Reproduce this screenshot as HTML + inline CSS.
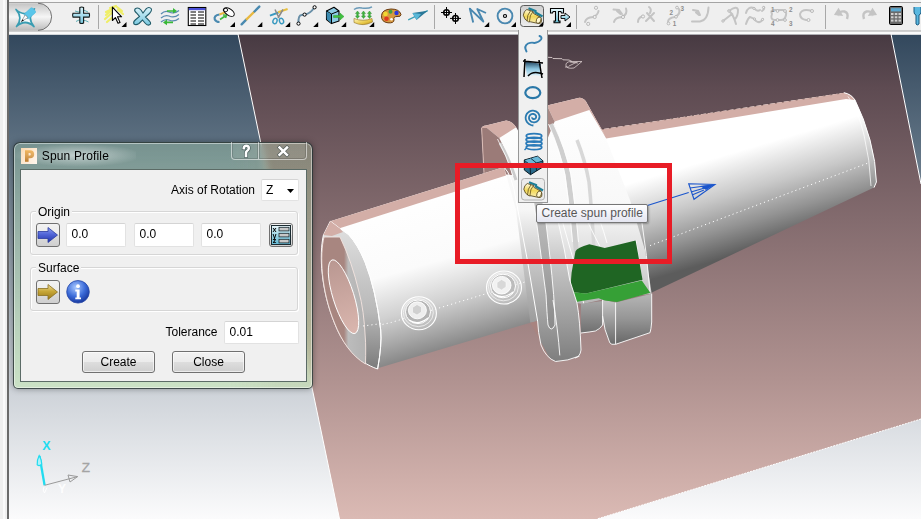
<!DOCTYPE html>
<html><head><meta charset="utf-8">
<style>
html,body{margin:0;padding:0}
body{width:921px;height:519px;overflow:hidden;position:relative;background:#efefef;font-family:"Liberation Sans",sans-serif;}
.abs{position:absolute}
#vp{position:absolute;left:0;top:0}

.t{position:absolute;font-size:12px;line-height:12px;white-space:pre;color:#000}
.fld{box-sizing:border-box;background:#fff;border:1px solid #e2e2e2;border-top-color:#d4d4d4;border-radius:2px}
.grp{box-sizing:border-box;border:1px solid #d6d6d6;border-radius:3px;box-shadow:inset 1px 1px 0 #fff, 1px 1px 0 #fff}
.btn3{box-sizing:border-box;border:1px solid #707070;border-radius:3px;background:linear-gradient(#f2f2f2 0%,#ebebeb 50%,#dddddd 51%,#cfcfcf 100%)}
.pbtn{box-sizing:border-box;border:1px solid #707070;border-radius:3px;background:linear-gradient(#f2f2f2 0%,#ebebeb 50%,#dddddd 51%,#cfcfcf 100%);font-size:12px;text-align:center;line-height:20px;color:#000;box-shadow:inset 0 0 0 1px rgba(255,255,255,0.6)}
</style></head><body>
<svg id="vp" width="921" height="519" viewBox="0 0 921 519">
<defs>
<linearGradient id="bgG" x1="0" y1="35" x2="0" y2="519" gradientUnits="userSpaceOnUse">
<stop offset="0" stop-color="#33485d"/>
<stop offset="0.22" stop-color="#5c6f80"/>
<stop offset="0.73" stop-color="#cdd2d8"/>
<stop offset="1" stop-color="#fbfbfc"/>
</linearGradient>
<linearGradient id="plG" x1="0" y1="35" x2="0" y2="519" gradientUnits="userSpaceOnUse">
<stop offset="0" stop-color="#473a42"/>
<stop offset="0.11" stop-color="#5e4b52"/>
<stop offset="0.71" stop-color="#b09290"/>
<stop offset="1" stop-color="#dbbab4"/>
</linearGradient>
</defs>
<!-- chrome -->
<rect x="0" y="0" width="921" height="519" fill="#efefef"/>
<rect x="3" y="0" width="2" height="519" fill="#fafafa"/>
<rect x="7" y="0" width="2" height="519" fill="#6a6a6a"/>

<rect x="9" y="0" width="912" height="34" fill="#efefef"/>
<rect x="9" y="0" width="912" height="2" fill="#f6f6f6"/>
<rect x="9" y="2" width="912" height="1" fill="#a4a4a4"/>
<rect x="9" y="30.5" width="912" height="1.2" fill="#a8a8a8"/>
<rect x="9" y="31.7" width="912" height="3.1" fill="#fafafa"/>
<defs><linearGradient id="pillG" x1="0" y1="0" x2="0" y2="1"><stop offset="0" stop-color="#c4c4c4"/><stop offset="0.5" stop-color="#f6f6f6"/><stop offset="1" stop-color="#bcbcbc"/></linearGradient>
<linearGradient id="pillH" x1="0" y1="0" x2="1" y2="0"><stop offset="0" stop-color="#fff" stop-opacity="0.3"/><stop offset="0.7" stop-color="#fff" stop-opacity="0"/></linearGradient></defs>
<path d="M9,3.2 H38 A13.6,13.6 0 0 1 38,30.4 H9 Z" fill="url(#pillG)"/>
<path d="M38,3.2 A13.6,13.6 0 0 1 38,30.4" fill="none" stroke="#707070" stroke-width="1"/>
<!-- viewport bg -->
<rect x="9" y="34.8" width="912" height="484.2" fill="url(#bgG)"/>
<polygon points="238,34.8 891,34.8 921,184 921,419 597,519 339.5,519" fill="url(#plG)"/>
<polyline points="238,34 339.5,519" stroke="#ffffff" stroke-width="1" fill="none"/>
<polyline points="891,34 921,184" stroke="#ffffff" stroke-width="1" fill="none"/>

<defs>
<linearGradient id="coneG" gradientUnits="userSpaceOnUse" x1="722" y1="112" x2="762" y2="247">
<stop offset="0" stop-color="#ffffff"/><stop offset="0.3" stop-color="#ffffff"/><stop offset="0.58" stop-color="#c8c8c8"/><stop offset="0.8" stop-color="#939393"/><stop offset="1" stop-color="#5c5c5c"/>
</linearGradient>
<linearGradient id="cylG" gradientUnits="userSpaceOnUse" x1="425" y1="188" x2="470" y2="345">
<stop offset="0" stop-color="#ffffff"/><stop offset="0.45" stop-color="#fbfbfb"/><stop offset="0.7" stop-color="#d0d0d0"/><stop offset="0.86" stop-color="#a8a8a8"/><stop offset="1" stop-color="#828282"/>
</linearGradient>
<linearGradient id="flG" gradientUnits="userSpaceOnUse" x1="0" y1="110" x2="0" y2="362">
<stop offset="0" stop-color="#ffffff"/><stop offset="0.35" stop-color="#f6f6f6"/><stop offset="0.7" stop-color="#c0c0c0"/><stop offset="1" stop-color="#8a8a8a"/>
</linearGradient>
<linearGradient id="blkG" gradientUnits="userSpaceOnUse" x1="0" y1="295" x2="0" y2="345">
<stop offset="0" stop-color="#c8c8c8"/><stop offset="1" stop-color="#6c6c6c"/>
</linearGradient>
<linearGradient id="chG" gradientUnits="userSpaceOnUse" x1="0" y1="225" x2="0" y2="370">
<stop offset="0" stop-color="#e0e0e0"/><stop offset="0.6" stop-color="#b8b8b8"/><stop offset="1" stop-color="#7a7a7a"/>
</linearGradient>
<linearGradient id="boreG" gradientUnits="userSpaceOnUse" x1="0" y1="255" x2="0" y2="340">
<stop offset="0" stop-color="#b89690"/><stop offset="1" stop-color="#dcb8b0"/>
</linearGradient>
</defs>
<!-- CONE -->
<path d="M600,129.5 L844,92.7 Q851,94 855,100 Q864,118 870,140 Q876,162 876.4,182 L874,187.6 L651.3,292.8 L600,300 Z" fill="url(#coneG)"/>
<path d="M600,129.5 L844,92.7 Q851,94 855,100 L846,99 L606,138.5 Z" fill="#d3aea7"/>
<path d="M844,92.7 Q851,94 855,100 Q864,118 870,140 Q876,162 876.4,182 L874,187.6" fill="none" stroke="#fff" stroke-width="1"/>
<path d="M602,129.2 L844,92.8" stroke="#2a1818" stroke-width="0.8" stroke-dasharray="2,5" stroke-opacity="0.6" fill="none"/>
<path d="M848,96.5 Q858,110 864,135 Q870,160 871,186" fill="none" stroke="#fff" stroke-width="0.8" stroke-opacity="0.9"/>
<path d="M650,245.6 L869.5,162.5" stroke="#fff" stroke-width="1" stroke-dasharray="1.2,3" fill="none"/>
<!-- FLANGE 2 -->
<defs>
<linearGradient id="fl2G" gradientUnits="userSpaceOnUse" x1="0" y1="100" x2="0" y2="340">
<stop offset="0" stop-color="#ffffff"/><stop offset="0.45" stop-color="#f8f8f8"/><stop offset="0.75" stop-color="#cfcfcf"/><stop offset="1" stop-color="#8c8c8c"/>
</linearGradient>
<linearGradient id="neckG" gradientUnits="userSpaceOnUse" x1="0" y1="300" x2="0" y2="336">
<stop offset="0" stop-color="#a8a8a8"/><stop offset="1" stop-color="#6a6a6a"/>
</linearGradient>
<linearGradient id="blk2G" gradientUnits="userSpaceOnUse" x1="0" y1="292" x2="0" y2="345">
<stop offset="0" stop-color="#b8b8b8"/><stop offset="0.5" stop-color="#969696"/><stop offset="1" stop-color="#666666"/>
</linearGradient>
<linearGradient id="blk3G" gradientUnits="userSpaceOnUse" x1="0" y1="300" x2="0" y2="345">
<stop offset="0" stop-color="#c4c4c4"/><stop offset="1" stop-color="#6a6a6a"/>
</linearGradient>
</defs>
<path d="M547,105.4 L579.3,97.7 Q584,98 586,101.6 L601.6,129.3 L606,138.5 L630,200 L645,250 L651.7,293.7 L602.6,299.5 L583,304 L560,300 L547,200 Z" fill="url(#fl2G)"/>
<path d="M547,105.4 L579.3,97.7 Q584,98 586,101.6 L601.6,129.3 L606.3,138.5 L589.3,110 L554.6,121.6 Z" fill="#d3aea7"/>
<path d="M547,105.4 L554.6,121.6 L547,140 Z" fill="#a88884"/>
<path d="M551,124 Q563,150 568,175 Q573,210 575.5,242 Q578,270 580,300" stroke="#cfcfcf" stroke-width="5" fill="none"/>
<path d="M548.5,124 Q560,150 565,175 Q570,210 572.5,242 M553.5,124 Q566,150 571,175 Q576,210 578.5,242" stroke="#fff" stroke-width="0.8" fill="none"/>
<path d="M577,140 Q585,160 589,182 Q592,212 594,250" stroke="#d8d8d8" stroke-width="3.5" fill="none"/>
<path d="M586.7,220 Q594,235 599.7,246 M599.7,220 Q604,232 607,243 M635.8,240 Q639,260 641.6,277.8 M641.6,220 Q647,255 650,292 M562,220 Q575,262 583.8,303.8" stroke="#fff" stroke-width="0.9" fill="none"/>
<!-- neck, key block -->
<path d="M581,303.8 L602.6,301 L602.6,325 Q599,331 595.4,331 Q589,332 581,333 Z" fill="url(#neckG)"/>
<path d="M581,333 Q590,332 595.4,331 Q600,329 602.6,325" fill="none" stroke="#fff" stroke-width="0.9"/>
<path d="M602.6,299.5 L615.6,302.5 L615.6,344.3 Q611,345 609.8,342.8 Q604,330 602.6,316 Z" fill="url(#blk3G)"/>
<path d="M615.6,302.5 L651.7,293.7 L651.7,322 Q651,330 650,332.7 L615.6,344.3 Z" fill="url(#blk2G)"/>
<path d="M602.6,316 Q604,330 609.8,342.8 Q611,345 615.6,344.3 L650,332.7 Q651,330 651.7,322 L651.7,293.7 M615.6,302.5 L615.6,344.3 M602.6,299.5 L602.6,325" fill="none" stroke="#fff" stroke-width="0.9"/>
<!-- green patch -->
<path d="M575.5,251.2 Q577,248 589.3,244.3 L604.8,248.1 L635.6,240.4 L638.7,257.4 L642.5,279.7 L586,293.6 L570,292 L571.6,272.8 Z" fill="#1f6523"/>
<path d="M570,292 L586,293.6 L641.8,280.5 L650.3,292.8 L617,302 L604.8,300.6 L598.6,298.2 L584.7,300.6 L575.5,302 Z" fill="#36a036"/>
<!-- FLANGE 1 -->
<defs>
<linearGradient id="fl1G" gradientUnits="userSpaceOnUse" x1="0" y1="118" x2="0" y2="362">
<stop offset="0" stop-color="#ffffff"/><stop offset="0.377" stop-color="#f6f6f6"/><stop offset="0.58" stop-color="#c8c8c8"/><stop offset="0.79" stop-color="#a4a4a4"/><stop offset="1" stop-color="#7e7e7e"/>
</linearGradient>
</defs>
<path d="M481.6,128 Q482,126 486,125.5 L506.2,120.4 Q512,121 516.2,127.3 Q540,170 552,200 L557.8,220 Q565,250 569.7,280 L577,303 Q580,320 581,350 L579.5,356 Q568,361 555.6,361.5 Q546,358 541,345 Q538,332 537.6,321 L530.3,322.7 L484,173 Z" fill="url(#fl1G)"/>
<path d="M481.6,128 Q482,126 486,125.5 L506.2,120.4 Q512,121 516.2,127.3 L499.3,138 L487,128 Z" fill="#d3aea7"/>
<path d="M481.6,128 L487,128 L499.3,138 Q508,155 512,175 L484,173 Z" fill="#9b7b78"/>
<path d="M481.6,128 L484,173" stroke="#e8c8c0" stroke-width="0.8" fill="none"/>
<path d="M500,143 Q509,158 516,180" stroke="#cccccc" stroke-width="3" fill="none"/>
<path d="M497.5,139 Q507,156 513,176" stroke="#fff" stroke-width="0.8" fill="none"/>
<path d="M530.3,322.7 L537.6,321 Q538,332 541,345 Q546,358 549,357 Z" fill="#a88480"/>
<path d="M537.6,321 Q538,332 541,345 Q546,358 555.6,361.5 Q568,361 579.5,356" fill="none" stroke="#fff" stroke-width="0.9"/>
<defs><linearGradient id="grvG" gradientUnits="userSpaceOnUse" x1="0" y1="140" x2="0" y2="330"><stop offset="0" stop-color="#d8d8d8"/><stop offset="0.5" stop-color="#b4b4b4"/><stop offset="1" stop-color="#8a8a8a"/></linearGradient></defs>
<path d="M520,140 Q524,150 527.4,165 Q532,190 535,211 Q539,240 541.3,257.6 Q544,280 546,294.6 Q547,315 548,325 Q551,333 555,325 Q555,310 553.6,294.6 Q552,275 550,257.6 Q547,230 544.4,211 Q540,185 535,165 Q532,152 528,140 Z" fill="url(#grvG)" stroke="#fff" stroke-width="0.9"/>


<path d="M557.8,220 Q565,250 569.7,280 L577,303 Q580,320 581,350 Q580,357 575,358" stroke="#fff" stroke-width="0.9" fill="none"/>
<path d="M553,300 Q558,330 559.8,355.4" stroke="#fff" stroke-width="0.9" fill="none"/>
<!-- LEFT CYLINDER -->
<path d="M330.3,221.2 L504,167 L516,210 L530.3,322.7 L376.8,368.6 Z" fill="url(#cylG)"/>
<path d="M330.3,221.2 L504,167 L506,175.5 L339.6,228.2 Z" fill="#d3aea7"/>
<path d="M504,167 Q512,175 516,200 Q528,260 537.6,321" fill="none" stroke="#fff" stroke-width="1"/>
<path d="M362,329 L391.5,322.4 L526.8,281.4" stroke="#fff" stroke-width="1" stroke-dasharray="1.2,3" fill="none"/>
<!-- holes -->
<g>
<ellipse cx="418.9" cy="313.3" rx="17.5" ry="16.5" fill="rgba(255,255,255,0.12)" stroke="#fff" stroke-width="1.1"/>
<ellipse cx="418.3" cy="312.6" rx="15" ry="14" fill="none" stroke="#f4f4f4" stroke-width="0.8"/>
<ellipse cx="418" cy="311.8" rx="12.5" ry="11.8" fill="#b4b4b4" stroke="#fff" stroke-width="1"/>
<path d="M409,320 Q418,326 428,318" stroke="#fff" stroke-width="1.2" fill="none"/>
<ellipse cx="417.4" cy="310.3" rx="9" ry="8.5" fill="#eeeeee" stroke="#fff" stroke-width="0.9"/>
<path d="M412.5,307.5 L417,304.5 L421.5,307 L421.5,312 L417,315 L412.5,312.5 Z" fill="#d0d0d0" stroke="#fafafa" stroke-width="0.6"/>
</g>
<g>
<ellipse cx="504" cy="287.5" rx="17.5" ry="16.5" fill="rgba(255,255,255,0.12)" stroke="#fff" stroke-width="1.1"/>
<ellipse cx="503.4" cy="286.8" rx="15" ry="14" fill="none" stroke="#f4f4f4" stroke-width="0.8"/>
<ellipse cx="503" cy="286" rx="12.5" ry="11.8" fill="#bcbcbc" stroke="#fff" stroke-width="1"/>
<path d="M494,294 Q503,300 513,292" stroke="#fff" stroke-width="1.2" fill="none"/>
<ellipse cx="501.7" cy="285.2" rx="9.3" ry="8.8" fill="#f2f2f2" stroke="#fff" stroke-width="0.9"/>
<path d="M497,282.5 L501.5,279.5 L506,282 L506,287 L501.5,290 L497,287.5 Z" fill="#d8d8d8" stroke="#fafafa" stroke-width="0.6"/>
</g>
<!-- END FACE -->
<defs>
<linearGradient id="faceG" gradientUnits="userSpaceOnUse" x1="326" y1="0" x2="362" y2="0">
<stop offset="0" stop-color="#a88680"/><stop offset="0.5" stop-color="#a88680"/><stop offset="0.62" stop-color="#bcbcbc"/><stop offset="1" stop-color="#b4b4b4"/>
</linearGradient>
</defs>
<path d="M330.3,221.2 L323.4,235.1 C319,255 321,290 334.5,323 C343,345 357,362 377.6,369 Q382,345 380.7,330 Q376,290 365,262 Q358,245 349,235 L339.6,228.2 Z" fill="url(#chG)" stroke="#fff" stroke-width="1"/>
<path d="M324,237 C319.5,255 321,290 334.5,323 C342,342 352,356 365.5,364 Q366,345 365.3,338 Q364,310 359,292 Q352,262 340,237 Z" fill="url(#faceG)" stroke="#f4e4e0" stroke-width="0.9"/>
<g transform="rotate(-17.3 343.5 296.7)">
<ellipse cx="343.5" cy="296.7" rx="10.5" ry="38.5" fill="url(#boreG)" stroke="#fff" stroke-width="0.9"/>
</g>
<path d="M330.3,221.2 L339.6,228.2 L343,232 L331.9,236 L323.4,235.1 Z" fill="#d3aea7"/>
<path d="M363,326 L382,323.5" stroke="#fff" stroke-width="1" stroke-dasharray="1.2,3" fill="none"/>
<path d="M349,235 Q358,245 365,262 Q376,290 380.7,330 Q382,345 377.6,369" fill="none" stroke="#fff" stroke-width="1"/>
<polyline points="921,419 597,519" stroke="#ffffff" stroke-width="1" stroke-dasharray="2,1" fill="none"/>
</svg>



<!-- TOOLBAR ICONS -->
<svg class="abs" style="left:0;top:0" width="921" height="34">
<defs>
<linearGradient id="lbG" x1="0" y1="0" x2="0" y2="1"><stop offset="0" stop-color="#d8f2fa"/><stop offset="1" stop-color="#78c8e0"/></linearGradient>
<linearGradient id="ylG" x1="0" y1="0" x2="1" y2="1"><stop offset="0" stop-color="#fff8c0"/><stop offset="0.6" stop-color="#e8c848"/><stop offset="1" stop-color="#b89020"/></linearGradient>
</defs>
<!-- star pencil -->
<path d="M16,9.5 Q25,18 34.5,8.8 Q26.5,18 34,26.5 Q25,18.5 16.5,26.5 Q23.5,18 16,9.5 Z" fill="#f4fbfd" stroke="#3a9db2" stroke-width="1.7" stroke-linejoin="round"/>
<g transform="rotate(-42 29.5 13.5)"><rect x="24.5" y="10.3" width="11" height="6.6" rx="1.5" fill="#5ac6ea" stroke="#48b4d8" stroke-width="0.5"/></g>
<path d="M25.3,14.8 L21.2,21.8 L27.8,17.6 Z" fill="#ffffff" stroke="#555" stroke-width="0.5"/>
<path d="M22.8,19.2 L21.2,21.8 L23.8,20.4 Z" fill="#000"/>
<!-- plus -->
<path d="M75,11 Q78,12.5 82,11.8 M76,21.5 Q79,19 83,20 M81,10.5 Q85,9.8 88,12 M82,20.5 Q86,20 88.5,22" fill="none" stroke="#3aa0a8" stroke-width="0.8"/>
<path d="M79.8,7.5 Q81.7,6.6 83.6,7.5 L83.6,13.3 L89.2,13.3 Q90,15.2 89.2,17.1 L83.6,17.1 L83.6,23 Q81.7,24 79.8,23 L79.8,17.1 L73,17.1 Q72.2,15.2 73,13.3 L79.8,13.3 Z" fill="url(#lbG)" stroke="#101818" stroke-width="1.1"/>
<!-- separators -->
<rect x="98" y="5" width="1" height="24" fill="#a8a8a8"/>
<rect x="434" y="5" width="1" height="24" fill="#a8a8a8"/>
<rect x="576" y="5" width="1" height="24" fill="#a8a8a8"/>
<rect x="825" y="5" width="1" height="24" fill="#a8a8a8"/>
<!-- cursor w glow -->
<g opacity="0.85"><path d="M106,15 L114,8 M105,19 L113,12 M107,22 L115,15 M110,8 L116,6 M117,7 L122,11 M118,10 L123,14 M106,12 L112,9" stroke="#f0ee50" stroke-width="2.2" stroke-linecap="round"/></g>
<path d="M112.4,7.2 L112.4,20.5 L115.4,17.6 L118,23.3 L120,22.4 L117.5,16.8 L121.6,16.8 Z" fill="#fff" stroke="#000" stroke-width="1.1" stroke-linejoin="round"/>
<!-- X -->
<path d="M135,9 Q138,6.5 141,10 L143,13 L146,9 Q149,6 151.5,9 Q152,11 149.5,13.5 L145.5,17 L149.5,21 Q152,24 149,25 Q147,25.5 145,23 L142.5,20 L139,23.5 Q136,25.5 134,24 Q132.8,22 135.5,19.8 L139.5,16.5 L136.5,13 Q133.8,10.8 135,9 Z" fill="url(#lbG)" stroke="#205a68" stroke-width="1.1"/>
<!-- waves -->
<path d="M161,14 Q165,10 169,12 Q174,14.5 179,10.5 M161,18 Q165,14.5 169,16 Q174,18.5 179,14.5 M161,22 Q165,18.5 169,20 Q174,22.5 179,18.5" fill="none" stroke="#5a8ab0" stroke-width="1.3"/>
<path d="M167,10.2 L173,10.2 L173,8 L177,11 L173,13.5 L173,11.8 L167,11.8 Z" fill="#38b838"/>
<path d="M173,21.5 L167,21.5 L167,19.5 L163,22.5 L167,25.2 L167,23.2 L173,23.2 Z" fill="#38b838"/>
<!-- table -->
<rect x="188.3" y="7.5" width="17.5" height="18" fill="#fff" stroke="#000" stroke-width="1.1"/>
<rect x="188.8" y="8" width="16.5" height="2.2" fill="#4a50d8"/>
<path d="M190.5,12 H196 M198,12 H204 M190.5,15 H196 M198,15 H204 M190.5,18 H196 M198,18 H204 M190.5,21 H196 M198,21 H204 M190.5,24 H196 M198,24 H204" stroke="#000" stroke-width="1.2"/>
<!-- link -->
<path d="M219.5,14.5 Q213.5,15.5 214.8,19.5 Q216,22 219.5,22" fill="none" stroke="#4a8ab0" stroke-width="2.2"/>
<path d="M219.5,14.5 L226,12" stroke="#e8b840" stroke-width="2"/>
<path d="M220,19.5 L226,15.5 M223,15 L226.5,15.2 L225.5,18" fill="none" stroke="#40b840" stroke-width="1.6"/>
<ellipse cx="229" cy="12" rx="6" ry="3.2" transform="rotate(35 229 12)" fill="#fff" stroke="#000" stroke-width="1"/>
<ellipse cx="225.5" cy="10" rx="2.3" ry="1.6" fill="none" stroke="#000" stroke-width="0.9"/>
<!-- line -->
<path d="M241.6,24.3 L246,19.8" stroke="#4a8ab0" stroke-width="2.4" stroke-linecap="round"/>
<path d="M246,19.8 L254.5,11.5" stroke="#e8b840" stroke-width="2.4"/>
<path d="M254.5,11.5 L259.3,6.6" stroke="#4a8ab0" stroke-width="2.4" stroke-linecap="round"/>
<!-- scissors -->
<path d="M269.9,15.6 L278.6,12.5" stroke="#3a9ac0" stroke-width="2"/>
<path d="M278,12.3 L287.6,9" stroke="#e8c040" stroke-width="2"/>
<path d="M275,9.5 L279,18 M283,9.5 L278,18" stroke="#8a8a8a" stroke-width="1.5"/>
<ellipse cx="275" cy="21" rx="2" ry="2.8" fill="none" stroke="#3a9ac0" stroke-width="1.4" transform="rotate(20 275 21)"/>
<ellipse cx="281.5" cy="21" rx="2" ry="2.8" fill="none" stroke="#3a9ac0" stroke-width="1.4" transform="rotate(-20 281.5 21)"/>
<!-- curve -->
<path d="M298.5,23.6 Q298,15.5 301.5,15 Q303,14.6 304.6,14.6 Q310,14 314.6,7.3" fill="none" stroke="#6a90a8" stroke-width="2"/>
<circle cx="298.5" cy="23.6" r="1.6" fill="#fff" stroke="#000" stroke-width="1"/>
<circle cx="304.6" cy="14.6" r="1.6" fill="#fff" stroke="#000" stroke-width="1"/>
<circle cx="314.6" cy="7.3" r="1.6" fill="#fff" stroke="#000" stroke-width="1"/>
<!-- cube -->
<path d="M326.5,11 L334,7.2 L339,11 L339,21 L331.5,23.6 L326.5,19.5 Z" fill="#8ccce6" stroke="#000" stroke-width="1.1" stroke-linejoin="round"/>
<path d="M326.5,11 L331.5,14 L339,11 M331.5,14 L331.5,23.6" fill="none" stroke="#000" stroke-width="1"/>
<path d="M326.5,11.5 L331,14.3 L331,23 L326.8,19.3 Z" fill="#3a8ab0"/>
<path d="M333.5,15.5 L340,15.5 L340,13 L344,16.5 L340,20 L340,17.5 L333.5,17.5 Z" fill="#40c040" stroke="#30a030" stroke-width="0.5"/>
<!-- surface -->
<path d="M354,9.5 Q357,7 362,8 Q368,9 372,6.8" fill="none" stroke="#6a9ab8" stroke-width="1.4"/>
<path d="M357.5,11 L359.5,13.5 L358.3,13.5 L358.3,16 L359.5,16 L357.5,18.5 L355.5,16 L356.7,16 L356.7,13.5 L355.5,13.5 Z M363.5,11 L365.5,13.5 L364.3,13.5 L364.3,16 L365.5,16 L363.5,18.5 L361.5,16 L362.7,16 L362.7,13.5 L361.5,13.5 Z M369.5,11 L371.5,13.5 L370.3,13.5 L370.3,16 L371.5,16 L369.5,18.5 L367.5,16 L368.7,16 L368.7,13.5 L367.5,13.5 Z" fill="#40b840" stroke="#208020" stroke-width="0.4"/>
<path d="M354,18.5 Q363,22 372,18.5 L372.5,22 Q363,27 354,22.5 Z" fill="url(#ylG)" stroke="#907020" stroke-width="0.6"/>
<!-- palette -->
<path d="M381.5,15.5 Q382,9.5 391,9 Q399.5,9 401,14.5 Q401,17 397,16.5 Q393,16.5 394,20 Q394,23.3 388,22.8 Q381,22 381.5,15.5 Z" fill="#d89a40" stroke="#6a3a10" stroke-width="1"/>
<circle cx="385.5" cy="14" r="2.3" fill="#f0d830"/>
<circle cx="390.5" cy="11.8" r="2" fill="#40a040"/>
<circle cx="396.5" cy="13" r="2.2" fill="#2a3ae0"/>
<circle cx="386.5" cy="18.8" r="2.3" fill="#e03a20"/>
<circle cx="391.5" cy="19.3" r="1.3" fill="#fff"/>
<!-- plane arrow -->
<path d="M408.2,19.8 L427.7,10.7" stroke="#3aa0b8" stroke-width="1.3"/>
<path d="M412.5,13 L427.7,10.7 L416.5,20 Z" fill="#2a7898"/>
<path d="M412.5,13 L421,14 L416.5,20 Z" fill="#5ab8d8"/>
<!-- crosshairs -->
<g stroke="#000" stroke-width="1" fill="none">
<circle cx="446.5" cy="12.5" r="2.8" stroke-width="1.5"/><path d="M441,12.5 H452 M446.5,7 V18"/>
<circle cx="455.5" cy="18.4" r="2.8" stroke-width="1.5"/><path d="M450,18.4 H461 M455.5,13 V24"/>
</g>
<!-- N polyline -->
<path d="M473.2,22.5 L469.8,8.6 L483.3,21.5 L477.3,9 L486,13" fill="none" stroke="#4a88b0" stroke-width="1.9" stroke-linejoin="round"/>
<!-- circle -->
<circle cx="505" cy="16" r="7.4" fill="none" stroke="#4a88b0" stroke-width="1.9"/>
<circle cx="505" cy="16" r="1.5" fill="#fff" stroke="#000" stroke-width="1.2"/>
<!-- pressed button -->
<defs><linearGradient id="prG" x1="0" y1="0" x2="0" y2="1"><stop offset="0" stop-color="#d0d0d0"/><stop offset="1" stop-color="#ececec"/></linearGradient></defs>
<rect x="520.5" y="5.5" width="23" height="21" rx="3" fill="url(#prG)" stroke="#5a5a5a" stroke-width="1"/><g class="spun">
<defs><linearGradient id="ylG2" x1="0" y1="0" x2="0" y2="1"><stop offset="0" stop-color="#fffadc"/><stop offset="0.5" stop-color="#f2d858"/><stop offset="1" stop-color="#faf0b8"/></linearGradient></defs>
<path d="M528.5,8.3 L535.5,11 L535.5,12.5 L542.5,16.5" stroke="#1e7f96" stroke-width="2.3" fill="none"/>
<path d="M526.8,9.5 L533,11.5 L533.6,13.5 L540.5,17.2 Q542,19.5 541.2,22.5 Q539.8,24 538,23.4 L530.5,21.8 L528.5,21.8 Q524.2,19.8 523.3,15.2 Q523.8,11 526.8,9.5 Z" fill="url(#ylG2)" stroke="#4a3a10" stroke-width="0.8"/>
<path d="M533,11.5 Q529.5,15 529.4,21.8 M530.5,10.8 Q527,14.5 527,21.2" stroke="#4a3a10" stroke-width="0.7" fill="none"/>
<ellipse cx="538.6" cy="20.2" rx="2.2" ry="3.3" transform="rotate(22 538.6 20.2)" fill="#fff8d0" stroke="#4a3a10" stroke-width="0.75"/>
</g>
<!-- T -->
<defs><linearGradient id="tG" x1="0" y1="0" x2="0" y2="1"><stop offset="0" stop-color="#e8f8fc"/><stop offset="1" stop-color="#68c0d8"/></linearGradient></defs>
<path d="M550.5,8.5 H563.5 V13 H561.5 L560.8,11.5 H558.5 V21 H560 V22.8 H554 V21 H555.5 V11.5 H553.2 L552.5,13 H550.5 Z" fill="url(#tG)" stroke="#000" stroke-width="1.1"/>
<path d="M561,15.5 H565 V13 L570,17 L565,21 V18.5 H561 Z" fill="url(#tG)" stroke="#000" stroke-width="0.9"/>
<!-- triangles -->
<g fill="#000">
<polygon points="126.5,22 126.5,27 121.5,27"/>
<polygon points="235,22 235,27 230,27"/>
<polygon points="262.3,22 262.3,27 257.3,27"/>
<polygon points="290.2,22 290.2,27 285.2,27"/>
<polygon points="318.2,22 318.2,27 313.2,27"/>
<polygon points="346.2,22 346.2,27 341.2,27"/>
<polygon points="374.2,22 374.2,27 369.2,27"/>
<polygon points="489.2,22 489.2,27 484.2,27"/>
<polygon points="516,22 516,27 511,27"/>
<polygon points="543,22 543,26.5 538.5,26.5"/>
<polygon points="571,22 571,27 566,27"/>
</g>
<!-- gray icons -->
<g fill="none" stroke="#c4c4c4" stroke-width="2" stroke-linecap="round">
<path d="M585,22 Q586,17.5 593,17 Q598,15 598.5,11"/>
<path d="M614,22 Q615,17.5 622,17 Q628,14 626,8.5"/>
<path d="M613.5,9.5 L619,10 L622,14 M617,11 L620.5,14"/>
<path d="M638,22 Q638,18 642,16.5 M647,13 L654,21 M654,13 L646,21 M650,13 Q652,9 649,7"/>
<path d="M668,22 Q668,18 675,17 Q681,14 679,9"/>
<path d="M692,21.5 H700 Q708,20 708.5,7.5"/>
<path d="M693,10 L698,11 L700,15 M696,12.5 L699,15"/>
<path d="M729,11 Q737,5 738,10 Q738,16 735,19 M723,21 L732,14 L728.5,10.5 M732,14 Q735,20 736,24"/>
<path d="M746,13 Q748,6 754,8 Q757,12 760,10 M762,11 Q765,9 764,7 M746,24 Q748,18 750,17 Q754,18 756,21 Q760,24 763,19"/>
<path d="M772,14 Q770,10 774,10 H783 Q787,11 786,15 Q785,20 781,20 H774 Q770,19 772,14"/>
<path d="M812,11 Q802,8 800,14 Q800,19 806,20"/>
</g>
<g fill="#efefef" stroke="#b4b4b4" stroke-width="0.9">
<circle cx="596" cy="7.8" r="1.6"/><circle cx="594.7" cy="17" r="1.6"/><circle cx="588.2" cy="23.9" r="1.6"/>
<circle cx="623" cy="17" r="1.6"/><circle cx="643" cy="16.5" r="1.6"/>
<circle cx="677" cy="7.6" r="1.4"/><circle cx="676" cy="16.8" r="1.4"/><circle cx="668.5" cy="23.5" r="1.4"/>
<circle cx="729" cy="11" r="1.2"/><circle cx="723" cy="21" r="1.2"/>
<circle cx="754" cy="8.5" r="1.1"/><circle cx="763.5" cy="7.5" r="1.1"/><circle cx="754.5" cy="19" r="1.1"/><circle cx="762.5" cy="19.5" r="1.1"/>
<circle cx="777.5" cy="11" r="1.4"/><circle cx="785" cy="11" r="1.4"/><circle cx="777.5" cy="20" r="1.4"/><circle cx="785" cy="20" r="1.4"/>
<circle cx="812" cy="11" r="1.5"/><circle cx="808.5" cy="20" r="1.5"/>
</g>
<g font-family="Liberation Sans" font-size="6.3" fill="#8c8c8c" font-weight="bold">
<text x="669.6" y="14.5">2</text><text x="680.5" y="10.6">3</text><text x="672.8" y="25.8">1</text>
<text x="771" y="11.5">1</text><text x="789" y="11.5">2</text><text x="771" y="25.5">4</text><text x="789" y="25.5">3</text>
</g>
<path d="M838,16 Q839,10.5 844.5,11.5 Q849,13 847,19 M836,14 L838.5,10 L841,14.5 Z" fill="none" stroke="#c4c4c4" stroke-width="2.4"/>
<path d="M873,16 Q872,10.5 866.5,11.5 Q862,13 864,19 M875,14 L872.5,10 L870,14.5 Z" fill="none" stroke="#c4c4c4" stroke-width="2.4"/>
<!-- calculator -->
<rect x="889.5" y="6.5" width="13" height="18" rx="1.2" fill="#6a6a6a" stroke="#000" stroke-width="1"/>
<rect x="891" y="8.2" width="10" height="3.2" fill="#5aa8d0"/>
<g fill="#d0d0d0"><rect x="891" y="13" width="2.5" height="2"/><rect x="894.8" y="13" width="2.5" height="2"/><rect x="898.5" y="13" width="2.5" height="2"/><rect x="891" y="16.3" width="2.5" height="2"/><rect x="894.8" y="16.3" width="2.5" height="2"/><rect x="898.5" y="16.3" width="2.5" height="2"/><rect x="891" y="19.6" width="2.5" height="2"/><rect x="894.8" y="19.6" width="2.5" height="2"/><rect x="898.5" y="19.6" width="2.5" height="2"/></g>
<!-- wrench -->
<path d="M914,7 L914,12 Q914,14.5 916,15 L916,24 Q917,26 919,24 L919,15 Q921,14.5 921,12 L921,7" fill="#5ab8e0" stroke="#1a5a80" stroke-width="1"/>
</svg>
<!-- wire cone near top -->
<svg class="abs" style="left:0;top:0" width="921" height="519">
<polyline points="548,57.3 552,57.5 553,58.5 562,58.7 563,59.8 569,60 572,61.5" fill="none" stroke="#d8cccc" stroke-width="0.9"/>
<path d="M565,67 L569,67 M566,64 Q567,61 574,61.5 L582,61.5 L574,68 Q567,69 566,66 Z M570,62 L578,63 M569,66 L577,62" fill="none" stroke="#d8cccc" stroke-width="0.8"/>
<!-- blue axis arrow -->
<line x1="647.4" y1="205.4" x2="688.7" y2="192.4" stroke="#1a55cc" stroke-width="1.1"/>
<path d="M688.7,183.7 L715,184.5 L694,199.3 Z M688.7,183.7 L694,199.3 M690,188 L712,185 M691,192 L708,187 M692,195 L704,190" fill="none" stroke="#1a55cc" stroke-width="1.1"/>
<polygon points="700,186 715,184.5 706,190" fill="#1a55cc"/>
</svg>
<!-- DROPDOWN -->
<div class="abs" style="left:518px;top:30px;width:30px;height:173px;box-sizing:border-box;border:1px solid #979797;border-top:none;background:#f0f0f0;"></div>
<svg class="abs" style="left:518px;top:30px" width="30" height="173">
<path d="M8.5,21.5 Q5.5,16 10,13.5 Q13.5,12 16.5,13 Q20,13 23,9.5 Q24.5,7 21.5,6" fill="none" stroke="#3a82b0" stroke-width="1.9" stroke-linecap="round" transform="translate(0,0)"/>
<defs><linearGradient id="trG" x1="0" y1="0" x2="0" y2="1"><stop offset="0" stop-color="#1a3a55"/><stop offset="0.5" stop-color="#8cc6e0"/><stop offset="1" stop-color="#e8f6fc"/></linearGradient></defs>
<path d="M7,31 L23,34 L22,46 Q14,44 9,47 Z" fill="url(#trG)"/>
<path d="M5,31 L25,33 M7,29 L6,47 M21,30 L24,48 M10,46 Q15,40 25,44" fill="none" stroke="#000" stroke-width="1.5"/>
<ellipse cx="14.8" cy="62.7" rx="7.5" ry="5.5" fill="none" stroke="#2a78a8" stroke-width="2.2"/>
<polyline points="14.4,87.3 14.3,87.4 14.3,87.6 14.3,87.8 14.3,88.0 14.4,88.2 14.4,88.3 14.6,88.5 14.7,88.7 14.9,88.8 15.1,89.0 15.4,89.0 15.6,89.1 15.9,89.1 16.2,89.1 16.5,89.0 16.8,88.9 17.1,88.8 17.4,88.6 17.6,88.3 17.8,88.0 18.0,87.7 18.1,87.4 18.1,87.0 18.1,86.6 18.1,86.2 18.0,85.9 17.8,85.5 17.5,85.1 17.2,84.8 16.9,84.5 16.5,84.3 16.0,84.1 15.6,84.0 15.1,83.9 14.5,83.9 14.0,84.0 13.5,84.2 13.0,84.4 12.6,84.7 12.1,85.0 11.8,85.5 11.5,86.0 11.2,86.5 11.1,87.0 11.0,87.6 11.0,88.2 11.1,88.8 11.3,89.4 11.6,90.0 12.0,90.5 12.5,91.0 13.0,91.4 13.6,91.8 14.3,92.0 15.0,92.2 15.7,92.3 16.5,92.3 17.2,92.1 18.0,91.9 18.7,91.6 19.3,91.1 19.9,90.6 20.4,90.0 20.9,89.4 21.2,88.6 21.4,87.8 21.5,87.0 21.5,86.2 21.3,85.4 21.0,84.6 20.6,83.8 20.1,83.1 19.5,82.4 18.8,81.9 18.0,81.4 17.1,81.1 16.2,80.8 15.2,80.7 14.2,80.7 13.2,80.9 12.3,81.2 11.3,81.6 10.5,82.2 9.7,82.8 9.0,83.6 8.5,84.5 8.1,85.4 7.8,86.4 7.6,87.4 7.7,88.5 7.8,89.5 8.2,90.5 8.7,91.5 9.3,92.4 10.1,93.2 11.0,94.0 12.0,94.5 13.0,95.0 14.2,95.3 15.4,95.5" fill="none" stroke="#2a7ab0" stroke-width="1.8"/>
<g fill="none" stroke="#2a7ab8" stroke-width="1.7">
<ellipse cx="16" cy="106" rx="7.8" ry="2.4"/><ellipse cx="16" cy="109.8" rx="8" ry="2.4"/><ellipse cx="16" cy="113.6" rx="8" ry="2.4"/><ellipse cx="16" cy="117.3" rx="7.8" ry="2.4"/>
</g><path d="M8.5,118 L6.5,120" stroke="#2a7ab8" stroke-width="1.5"/>
<path d="M6.3,130 L19.5,126.2 L24.9,130.8 L24.9,137 L12.5,144.7 L6.3,140 Z" fill="#2a6a8a" stroke="#0a1a22" stroke-width="1"/>
<path d="M6.3,130 L12,134.5 L24.9,130.8 M12,134.5 L12.5,144.7" fill="none" stroke="#0a1a22" stroke-width="0.9"/>
<path d="M6.8,130.2 L19.5,126.6 L24.4,130.8 L12,134.2 Z" fill="#6ab8d8"/>
<path d="M13,128.5 L18,132.6 L18.5,141" fill="none" stroke="#0a1a22" stroke-width="0.8"/>
<rect x="3.5" y="148.5" width="23" height="21.5" rx="3" fill="#ececec" stroke="#b0b0b0"/><g transform="translate(-517.5,144)"><g class="spun">
<defs><linearGradient id="ylG3" x1="0" y1="0" x2="0" y2="1"><stop offset="0" stop-color="#fffadc"/><stop offset="0.5" stop-color="#f2d858"/><stop offset="1" stop-color="#faf0b8"/></linearGradient></defs>
<path d="M528.5,8.3 L535.5,11 L535.5,12.5 L542.5,16.5" stroke="#1e7f96" stroke-width="2.3" fill="none"/>
<path d="M526.8,9.5 L533,11.5 L533.6,13.5 L540.5,17.2 Q542,19.5 541.2,22.5 Q539.8,24 538,23.4 L530.5,21.8 L528.5,21.8 Q524.2,19.8 523.3,15.2 Q523.8,11 526.8,9.5 Z" fill="url(#ylG3)" stroke="#4a3a10" stroke-width="0.8"/>
<path d="M533,11.5 Q529.5,15 529.4,21.8 M530.5,10.8 Q527,14.5 527,21.2" stroke="#4a3a10" stroke-width="0.7" fill="none"/>
<ellipse cx="538.6" cy="20.2" rx="2.2" ry="3.3" transform="rotate(22 538.6 20.2)" fill="#fff8d0" stroke="#4a3a10" stroke-width="0.75"/>
</g></g>
</svg>
<!-- RED RECT -->
<div class="abs" style="left:455px;top:163px;width:217px;height:101px;box-sizing:border-box;border:5.3px solid #e81c26;"></div>
<!-- TOOLTIP -->
<div class="abs" style="left:535.5px;top:203.5px;width:112px;height:19px;box-sizing:border-box;border:1px solid #767676;border-radius:2px;background:linear-gradient(#ffffff,#e4e5f0);box-shadow:1px 1px 2px rgba(0,0,0,0.3);"></div>
<div class="t" style="left:541.5px;top:207px;color:#575757;">Create spun profile</div>
<!-- AXIS -->
<svg class="abs" style="left:0;top:0" width="921" height="519">
<text x="42.3" y="450.3" font-family="Liberation Sans" font-size="12.5" font-weight="bold" fill="#22dcf0">X</text>
<line x1="44.6" y1="485.3" x2="39.5" y2="456" stroke="#22dcf0" stroke-width="2.3"/>
<path d="M39.2,455.5 Q36.8,460 37.2,464.8 Q39.5,466.5 41.8,464.2 Q41.5,459.5 39.2,455.5 Z" fill="#aef2fa" stroke="#22dcf0" stroke-width="1.2"/>
<line x1="44.6" y1="485.3" x2="77.6" y2="476.6" stroke="#9a9a9a" stroke-width="1"/>
<path d="M68,475 L77.6,476.6 L70,482 Z" fill="none" stroke="#9a9a9a" stroke-width="1"/>
<text x="81.8" y="471.8" font-family="Liberation Sans" font-size="13.5" fill="#a4a4a4" stroke="#a4a4a4" stroke-width="0.3">Z</text>
<text x="58" y="493" font-family="Liberation Sans" font-size="12" font-weight="bold" fill="#ffffff" opacity="0.9">Y</text><path d="M44,487 Q42,490 44.5,493 M47,487.5 L44.5,493" fill="none" stroke="#fff" stroke-width="1"/>
</svg>
<!-- DIALOG -->
<div id="dlg" class="abs" style="left:13px;top:142px;width:300px;height:247px;box-sizing:border-box;border:1px solid rgba(20,30,35,0.75);border-radius:7px 7px 5px 5px;background:linear-gradient(to right, rgba(200,190,170,0) 72%, rgba(170,140,110,0.10) 88%, rgba(170,140,110,0.10) 100%), linear-gradient(to bottom, rgba(170,215,175,0.34) 0%, rgba(185,228,180,0.40) 40%, rgba(200,240,180,0.52) 100%);backdrop-filter:blur(3px);box-shadow:0 0 6px rgba(0,0,0,0.35), inset 0 0 0 1px rgba(255,255,255,0.45);">
</div>
<svg class="abs" style="left:21px;top:148px" width="16" height="16"><defs><linearGradient id="pbg" x1="0" y1="0" x2="1" y2="1"><stop offset="0" stop-color="#fbd9b0"/><stop offset="1" stop-color="#fff6ee"/></linearGradient><linearGradient id="pfg" x1="0" y1="0" x2="0" y2="1"><stop offset="0" stop-color="#f0b050"/><stop offset="1" stop-color="#b87424"/></linearGradient></defs>
<rect x="0" y="0" width="16" height="16" fill="url(#pbg)"/>
<path d="M4,2.2 H9 Q13.2,2.4 13.2,6.3 Q13.2,10.2 9,10.3 H7.6 V13.8 H4 Z M7.6,5 V7.6 H8.7 Q9.8,7.6 9.8,6.3 Q9.8,5 8.7,5 Z" fill="url(#pfg)" fill-rule="evenodd"/></svg>
<div class="abs" style="left:6px;top:141px;width:130px;height:26px;background:radial-gradient(ellipse 50% 45% at 55% 55%, rgba(255,255,255,0.55), rgba(255,255,255,0) 100%);"></div>
<div class="t" style="left:41.8px;top:150px;letter-spacing:0.15px;color:#000;">Spun Profile</div>
<!-- title buttons -->
<div class="abs" style="left:231px;top:142px;width:28px;height:18px;box-sizing:border-box;border:1px solid rgba(255,255,255,0.5);border-top:none;border-radius:0 0 0 4px;background:rgba(255,255,255,0.08);box-shadow:inset 0 0 0 1px rgba(0,0,0,0.15)"></div>
<div class="abs" style="left:259px;top:142px;width:48px;height:18px;box-sizing:border-box;border:1px solid rgba(255,255,255,0.5);border-top:none;border-left:none;border-radius:0 0 4px 0;background:rgba(255,255,255,0.08);box-shadow:inset 0 0 0 1px rgba(0,0,0,0.15)"></div>
<svg class="abs" style="left:236px;top:142px" width="70" height="18">
<g stroke="#2a3a3a" stroke-width="3.8" stroke-linecap="square" fill="none" opacity="0.6">
<path d="M7.8,6.2 Q8,3.8 10.3,3.8 Q12.8,3.8 12.8,6.3 Q12.8,8 11,9 Q10,9.7 10,11"/><path d="M10,13.3 V13.9"/>
<path d="M43.5,5.5 L51,12.8 M51,5.5 L43.5,12.8"/>
</g>
<g stroke="#ffffff" stroke-width="2.5" stroke-linecap="square" fill="none">
<path d="M7.8,6.2 Q8,3.8 10.3,3.8 Q12.8,3.8 12.8,6.3 Q12.8,8 11,9 Q10,9.7 10,11"/><path d="M10,13.3 V13.9"/>
<path d="M43.5,5.5 L51,12.8 M51,5.5 L43.5,12.8"/>
</g>
</svg>

<!-- client -->
<div class="abs" style="left:20px;top:169px;width:287px;height:213px;box-sizing:border-box;border:1px solid #5b6b66;background:#f0f0f0;"></div>

<div class="t" style="left:171px;top:184px;">Axis of Rotation</div>
<div class="abs fld" style="left:261px;top:179px;width:38px;height:22px;"></div>
<div class="t" style="left:266px;top:184px;">Z</div>
<svg class="abs" style="left:286px;top:189px" width="9" height="5"><polygon points="1,0 8,0 4.5,4" fill="#000"/></svg>
<!-- origin group -->
<div class="abs grp" style="left:30px;top:211px;width:268px;height:44px;"></div>
<div class="t" style="left:36px;top:206px;background:#f0f0f0;padding:0 2px;">Origin</div>
<div class="abs btn3" style="left:36px;top:223px;width:24px;height:24px;"></div>
<svg class="abs" style="left:37px;top:226px" width="22" height="18"><defs><linearGradient id="arB" x1="0" y1="0" x2="0" y2="1"><stop offset="0" stop-color="#8f9ff0"/><stop offset="0.45" stop-color="#5266d8"/><stop offset="1" stop-color="#2233a8"/></linearGradient></defs><polygon points="1,5.5 11,5.5 11,1.5 20.5,9 11,16.5 11,12.5 1,12.5" fill="url(#arB)" stroke="#2a3aa0" stroke-width="0.8"/></svg>
<div class="abs fld" style="left:66px;top:223px;width:60px;height:24px;"></div>
<div class="t" style="left:71.5px;top:228px;">0.0</div>
<div class="abs fld" style="left:134px;top:223px;width:60px;height:24px;"></div>
<div class="t" style="left:139.5px;top:228px;">0.0</div>
<div class="abs fld" style="left:201px;top:223px;width:60px;height:24px;"></div>
<div class="t" style="left:206.5px;top:228px;">0.0</div>
<div class="abs btn3" style="left:269px;top:223px;width:24px;height:24px;"></div>
<svg class="abs" style="left:271px;top:225px" width="20" height="20"><defs><linearGradient id="xyzG" x1="0" y1="0" x2="0" y2="1"><stop offset="0" stop-color="#eaf6fa"/><stop offset="0.5" stop-color="#9ed6e6"/><stop offset="1" stop-color="#62b8d4"/></linearGradient></defs><rect x="0.5" y="0.5" width="19" height="19" fill="url(#xyzG)" stroke="#1a2a30"/><g font-family="Liberation Sans" font-weight="bold" font-size="7.2" fill="#000"><text x="1.6" y="7">x</text><text x="1.6" y="12.6">y</text><text x="1.8" y="18.4">z</text></g><rect x="8" y="2.3" width="10" height="3.6" fill="#c8c8c8" stroke="#1a2a30" stroke-width="0.8"/><rect x="8" y="8.3" width="10" height="3.6" fill="#c8c8c8" stroke="#1a2a30" stroke-width="0.8"/><rect x="8" y="14.3" width="10" height="3.6" fill="#c8c8c8" stroke="#1a2a30" stroke-width="0.8"/></svg>
<!-- surface group -->
<div class="abs grp" style="left:30px;top:267px;width:268px;height:44px;"></div>
<div class="t" style="left:36px;top:262px;background:#f0f0f0;padding:0 2px;">Surface</div>
<div class="abs btn3" style="left:36px;top:280px;width:24px;height:24px;"></div>
<svg class="abs" style="left:37px;top:283px" width="22" height="18"><defs><linearGradient id="arG" x1="0" y1="0" x2="0" y2="1"><stop offset="0" stop-color="#f0e0a0"/><stop offset="0.45" stop-color="#c8a838"/><stop offset="1" stop-color="#98781a"/></linearGradient></defs><polygon points="1,5.5 11,5.5 11,1.5 20.5,9 11,16.5 11,12.5 1,12.5" fill="url(#arG)" stroke="#8a7020" stroke-width="0.8"/></svg>
<svg class="abs" style="left:66px;top:280px" width="24" height="24"><defs><radialGradient id="infG" cx="0.4" cy="0.3" r="0.7"><stop offset="0" stop-color="#a8c8ff"/><stop offset="0.6" stop-color="#3a6ad8"/><stop offset="1" stop-color="#1a3aa0"/></radialGradient></defs><circle cx="12" cy="11.8" r="11.3" fill="url(#infG)" stroke="#2a4aa8" stroke-width="0.8"/><circle cx="12" cy="6.2" r="1.9" fill="#fff"/><path d="M9.3,9.6 H13.6 V17.4 H15 V19.2 H9.3 V17.4 H10.7 V11.4 H9.3 Z" fill="#fff"/></svg>
<!-- tolerance -->
<div class="t" style="left:165.5px;top:326px;">Tolerance</div>
<div class="abs fld" style="left:224px;top:321px;width:75px;height:23px;"></div>
<div class="t" style="left:229.5px;top:326px;">0.01</div>
<!-- buttons -->
<div class="abs pbtn" style="left:82px;top:351px;width:73px;height:22px;">Create</div>
<div class="abs pbtn" style="left:172px;top:351px;width:73px;height:22px;">Close</div>
</body></html>
